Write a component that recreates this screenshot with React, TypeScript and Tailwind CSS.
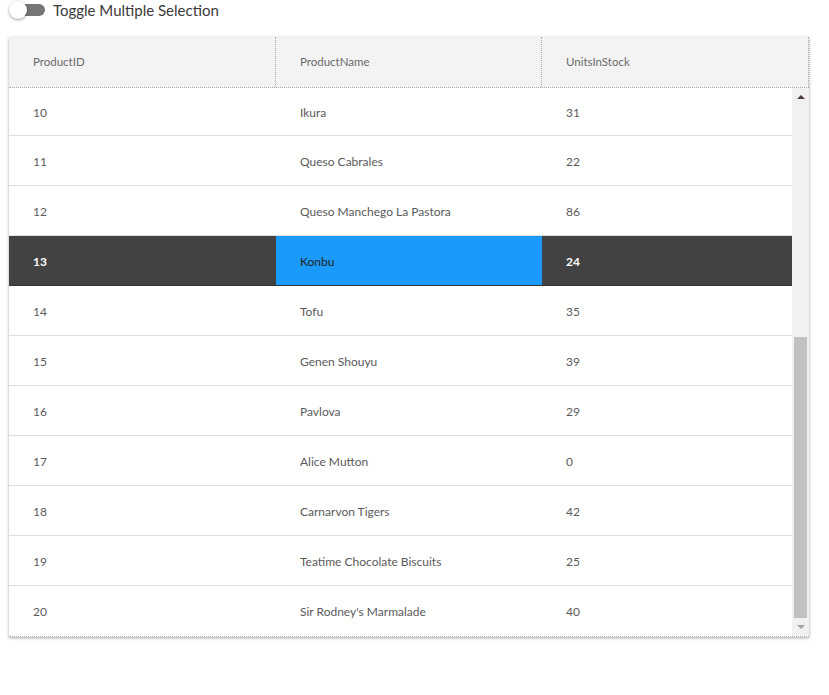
import { useState } from "react";

const rows = [
  { id: 10, name: "Ikura", stock: 31 },
  { id: 11, name: "Queso Cabrales", stock: 22 },
  { id: 12, name: "Queso Manchego La Pastora", stock: 86 },
  { id: 13, name: "Konbu", stock: 24 },
  { id: 14, name: "Tofu", stock: 35 },
  { id: 15, name: "Genen Shouyu", stock: 39 },
  { id: 16, name: "Pavlova", stock: 29 },
  { id: 17, name: "Alice Mutton", stock: 0 },
  { id: 18, name: "Carnarvon Tigers", stock: 42 },
  { id: 19, name: "Teatime Chocolate Biscuits", stock: 25 },
  { id: 20, name: "Sir Rodney's Marmalade", stock: 40 },
];

export default function App() {
  const [multi, setMulti] = useState(false);
  const selected = 13;

  return (
    <div className="h-[695px] w-[829px] bg-white font-['Lato','Noto_Sans',sans-serif]">
      {/* toggle */}
      <div className="flex h-[20px] items-center gap-[8px] pl-[9px]">
        <button onClick={() => setMulti(!multi)} className="relative h-[20px] w-[36px]">
          <span className="absolute left-[5px] top-[4px] h-[12px] w-[31px] rounded-full bg-[#767676]" />
          <span className="absolute left-0 top-px h-[18px] w-[18px] rounded-full bg-white shadow-[0_1px_3px_rgba(0,0,0,0.4)]" />
        </button>
        <span className="text-[15px] leading-[20px] text-[#3a3a3a]">Toggle Multiple Selection</span>
      </div>

      {/* grid */}
      <div className="ml-[9px] mt-[17px] w-[800px] bg-white shadow-[0_1px_3px_rgba(0,0,0,0.35)]">
        <div className="grid h-[51px] grid-cols-[267px_266px_267px] border-b border-dotted border-[#aaa] bg-[#f3f3f3] text-[11.5px] text-[#6a6a6a]">
          <div className="flex items-center border-r border-dotted border-[#aaa] pl-[24px]">ProductID</div>
          <div className="flex items-center border-r border-dotted border-[#aaa] pl-[24px]">ProductName</div>
          <div className="flex items-center border-r border-dotted border-[#aaa] pl-[24px]">UnitsInStock</div>
        </div>
        <div className="flex border-b border-dotted border-[#aaa]">
          <div className="flex-1 text-[12px] text-[#5a5a5a]">
            {rows.map((r, i) => {
              const sel = r.id === selected;
              return (
                <div
                  key={r.id}
                  className={`grid grid-cols-[267px_266px_250px] pt-[2px] border-b ${sel ? "border-[#333] bg-[#424242]" : "border-[#e0e0e0]"} ${i === 0 ? "h-[48px]" : "h-[50px]"} ${i === rows.length - 1 ? "border-b-0" : ""}`}
                >
                  <div className={`flex items-center pl-[24px] ${sel ? "font-bold text-white" : ""}`}>{r.id}</div>
                  <div className={`-mt-[2px] flex items-center pl-[24px] pt-[2px] ${sel ? "bg-[#1a9bfc] text-[#222]" : ""}`}>{r.name}</div>
                  <div className={`flex items-center pl-[24px] ${sel ? "font-bold text-white" : ""}`}>{r.stock}</div>
                </div>
              );
            })}
          </div>
          {/* scrollbar */}
          <div className="flex w-[17px] flex-col bg-[#f1f1f1]">
            <div className="flex h-[17px] items-center justify-center">
              <span className="h-0 w-0 border-x-[4px] border-b-[4px] border-x-transparent border-b-[#4b3a4b]" />
            </div>
            <div className="h-[232px]" />
            <div className="mx-[2px] h-[281px] bg-[#c1c1c1]" />
            <div className="flex flex-1 items-center justify-center">
              <span className="h-0 w-0 border-x-[4px] border-t-[4px] border-x-transparent border-t-[#a3a3a3]" />
            </div>
          </div>
        </div>
      </div>
    </div>
  );
}
